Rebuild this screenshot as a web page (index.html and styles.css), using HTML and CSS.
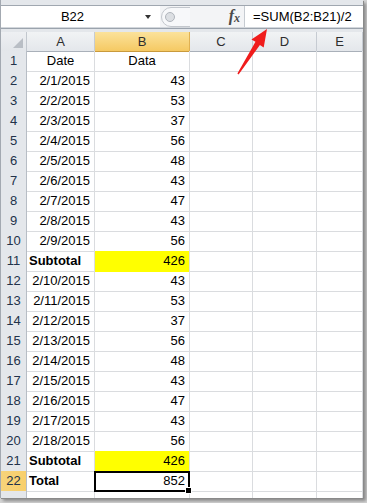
FILE: index.html
```html
<!DOCTYPE html>
<html>
<head>
<meta charset="utf-8">
<link rel="stylesheet" href="styles.css">
</head>
<body>
<div class="window">
  <div class="topstrip"></div>
  <div class="fbar">
    <div class="namebox"><span class="name">B22</span><span class="dd"><span class="tri"></span></span></div>
    <div class="mid">
      <svg class="grip" width="30" height="21" viewBox="0 0 30 21">
        <path d="M30,1.5 H11 A9.5,9.5 0 0 0 11,20.5 H30" fill="#f7f8fa" stroke="#c3c7cd" stroke-width="1"/>
        <circle cx="10" cy="11" r="4.5" fill="#dcdfe3" stroke="#b0b5bc" stroke-width="1"/>
      </svg>
      <span class="fx"><span class="f">f</span><span class="x">x</span></span>
    </div>
    <div class="formula">=SUM(B2:B21)/2</div>
  </div>
  <div class="band"></div>
  <div class="grid">
    <div class="row hrow">
      <div class="corner"><svg width="10" height="10" viewBox="0 0 10 10"><path d="M10,0 V10 H0 Z" fill="#b9bec5"/></svg></div>
      <div class="ch">A</div><div class="ch chsel">B</div><div class="ch">C</div><div class="ch">D</div><div class="ch">E</div>
    </div>
    <div class="row"><div class="rh">1</div><div class="c ctr">Date</div><div class="c ctr">Data</div><div class="c"></div><div class="c"></div><div class="c"></div></div>
    <div class="row"><div class="rh">2</div><div class="c num">2/1/2015</div><div class="c num">43</div><div class="c"></div><div class="c"></div><div class="c"></div></div>
    <div class="row"><div class="rh">3</div><div class="c num">2/2/2015</div><div class="c num">53</div><div class="c"></div><div class="c"></div><div class="c"></div></div>
    <div class="row"><div class="rh">4</div><div class="c num">2/3/2015</div><div class="c num">37</div><div class="c"></div><div class="c"></div><div class="c"></div></div>
    <div class="row"><div class="rh">5</div><div class="c num">2/4/2015</div><div class="c num">56</div><div class="c"></div><div class="c"></div><div class="c"></div></div>
    <div class="row"><div class="rh">6</div><div class="c num">2/5/2015</div><div class="c num">48</div><div class="c"></div><div class="c"></div><div class="c"></div></div>
    <div class="row"><div class="rh">7</div><div class="c num">2/6/2015</div><div class="c num">43</div><div class="c"></div><div class="c"></div><div class="c"></div></div>
    <div class="row"><div class="rh">8</div><div class="c num">2/7/2015</div><div class="c num">47</div><div class="c"></div><div class="c"></div><div class="c"></div></div>
    <div class="row"><div class="rh">9</div><div class="c num">2/8/2015</div><div class="c num">43</div><div class="c"></div><div class="c"></div><div class="c"></div></div>
    <div class="row"><div class="rh">10</div><div class="c num">2/9/2015</div><div class="c num">56</div><div class="c"></div><div class="c"></div><div class="c"></div></div>
    <div class="row"><div class="rh">11</div><div class="c bold">Subtotal</div><div class="c num yellow">426</div><div class="c"></div><div class="c"></div><div class="c"></div></div>
    <div class="row"><div class="rh">12</div><div class="c num">2/10/2015</div><div class="c num">43</div><div class="c"></div><div class="c"></div><div class="c"></div></div>
    <div class="row"><div class="rh">13</div><div class="c num">2/11/2015</div><div class="c num">53</div><div class="c"></div><div class="c"></div><div class="c"></div></div>
    <div class="row"><div class="rh">14</div><div class="c num">2/12/2015</div><div class="c num">37</div><div class="c"></div><div class="c"></div><div class="c"></div></div>
    <div class="row"><div class="rh">15</div><div class="c num">2/13/2015</div><div class="c num">56</div><div class="c"></div><div class="c"></div><div class="c"></div></div>
    <div class="row"><div class="rh">16</div><div class="c num">2/14/2015</div><div class="c num">48</div><div class="c"></div><div class="c"></div><div class="c"></div></div>
    <div class="row"><div class="rh">17</div><div class="c num">2/15/2015</div><div class="c num">43</div><div class="c"></div><div class="c"></div><div class="c"></div></div>
    <div class="row"><div class="rh">18</div><div class="c num">2/16/2015</div><div class="c num">47</div><div class="c"></div><div class="c"></div><div class="c"></div></div>
    <div class="row"><div class="rh">19</div><div class="c num">2/17/2015</div><div class="c num">43</div><div class="c"></div><div class="c"></div><div class="c"></div></div>
    <div class="row"><div class="rh">20</div><div class="c num">2/18/2015</div><div class="c num">56</div><div class="c"></div><div class="c"></div><div class="c"></div></div>
    <div class="row"><div class="rh">21</div><div class="c bold">Subtotal</div><div class="c num yellow blueline">426</div><div class="c"></div><div class="c"></div><div class="c"></div></div>
    <div class="row"><div class="rh rhsel">22</div><div class="c bold">Total</div><div class="c num selected">852</div><div class="c"></div><div class="c"></div><div class="c"></div></div>
    <div class="row"><div class="rh"></div><div class="c"></div><div class="c"></div><div class="c"></div><div class="c"></div><div class="c"></div></div>
  </div>
</div>
<svg class="arrow" width="367" height="503" viewBox="0 0 367 503">
  <polygon points="267,29 263.7,47.6 259.9,44.9 238.6,74.4 237.4,73.6 255.5,41.7 251.4,39.6" fill="#f01c1c"/>
</svg>
</body>
</html>
```

FILE: styles.css
```css
html, body {
  margin: 0;
  padding: 0;
}
body {
  width: 367px;
  height: 503px;
  overflow: hidden;
  position: relative;
  background: #d4d4d4;
  font-family: "Liberation Sans", Arial, sans-serif;
  font-size: 13px;
  color: #000;
}
.window {
  width: 363px;
  height: 498px;
  overflow: hidden;
  background: #fff;
  border-left: 1px solid #a3a9b1;
  box-sizing: border-box;
  box-shadow: 1px 1px 0 #8a8a8a, 3px 3px 3px rgba(0, 0, 0, 0.35);
}
.topstrip {
  height: 5px;
  background: #e4e7eb;
  border-bottom: 1px solid #a0a7b0;
}
.fbar {
  display: flex;
  height: 21px;
  line-height: 21px;
  background: #f3f4f6;
}
.namebox {
  width: 159px;
  display: flex;
  background: #fff;
}
.name {
  width: 143px;
  text-align: center;
  font-size: 13px;
}
.dd {
  width: 16px;
  display: flex;
  align-items: center;
  justify-content: center;
}
.tri {
  width: 0;
  height: 0;
  border-left: 3px solid transparent;
  border-right: 3px solid transparent;
  border-top: 4px solid #333;
  margin-left: -8px;
}
.mid {
  width: 84px;
  display: flex;
  justify-content: space-between;
  align-items: center;
  padding-right: 4px;
  box-sizing: border-box;
}
.grip {
  display: block;
}
.fx {
  font-family: "Liberation Serif", "Times New Roman", serif;
  font-style: italic;
  font-weight: bold;
  color: #4a4a4a;
  line-height: 21px;
}
.fx .f {
  font-size: 16px;
}
.fx .x {
  font-size: 12px;
  position: relative;
  top: 1px;
}
.formula {
  flex: 1;
  background: #fff;
  border-left: 1px solid #c6cbd1;
  padding-left: 8px;
  font-size: 13px;
  white-space: nowrap;
}
.band {
  height: 5px;
  box-sizing: border-box;
  border-top: 1px solid #d3d7dc;
  background: linear-gradient(#9ba3ad 0, #9ba3ad 1px, #e4e7eb 1px, #e4e7eb 100%);
}
.grid {
  display: flex;
  flex-direction: column;
}
.row {
  display: grid;
  grid-template-columns: 26px 68px 95px 63px 64px 46px;
  height: 20px;
}
.hrow {
  height: 19px;
}
.corner, .ch, .rh, .c {
  box-sizing: border-box;
  border-right: 1px solid #dadcdf;
  border-bottom: 1px solid #dadcdf;
}
.corner {
  background: linear-gradient(#eef0f3, #e3e6ea);
  border-right-color: #c2c7ce;
  border-bottom-color: #a9b0b9;
  display: flex;
  align-items: flex-end;
  justify-content: flex-end;
  padding: 0 3px 3px 0;
}
.corner svg {
  display: block;
}
.ch {
  background: linear-gradient(#f1f3f5, #e4e7eb);
  border-right-color: #c6cbd2;
  border-bottom-color: #a9b0b9;
  text-align: center;
  line-height: 19px;
  color: #2d2d2d;
  font-size: 13px;
}
.chsel {
  background: linear-gradient(#fbe29b, #f5c963);
  border-right-color: #e0b152;
  border-bottom-color: #c99a3c;
}
.rh {
  background: #e4e7eb;
  border-right-color: #b7bdc5;
  border-bottom-color: #c9ced5;
  text-align: center;
  line-height: 20px;
  color: #22324a;
  font-size: 13px;
}
.rhsel {
  background: linear-gradient(90deg, #f7d37a, #f8cf6b);
  border-bottom-color: #d7a64a;
}
.c {
  line-height: 20px;
  white-space: nowrap;
}
.ctr {
  text-align: center;
}
.num {
  text-align: right;
  padding-right: 4px;
}
.bold {
  font-weight: bold;
  padding-left: 2px;
}
.yellow {
  background: #ffff00;
  border-bottom-color: #ffff00;
}
.blueline {
  border-bottom-color: #1d2fd6;
}
.selected {
  position: relative;
}
.selected::after {
  content: "";
  position: absolute;
  left: -1px;
  top: 0;
  right: -1px;
  bottom: -1px;
  border: 2px solid #000;
}
.selected::before {
  content: "";
  position: absolute;
  right: -3px;
  bottom: -3px;
  width: 5px;
  height: 5px;
  background: #000;
  border: 1px solid #fff;
  z-index: 2;
}
.arrow {
  position: absolute;
  left: 0;
  top: 0;
  pointer-events: none;
}
```
